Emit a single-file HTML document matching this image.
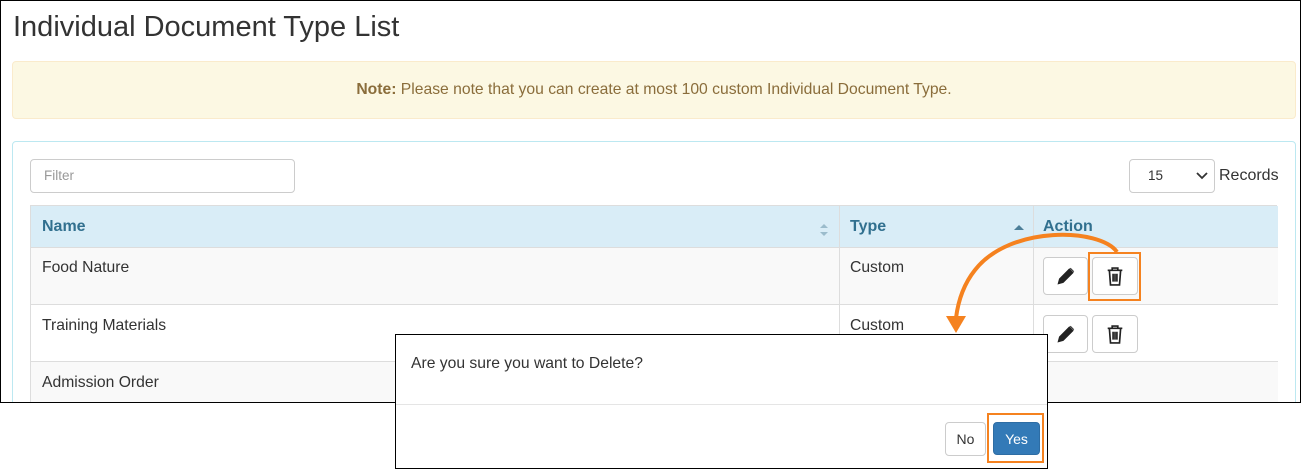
<!DOCTYPE html>
<html><head><style>
*{box-sizing:border-box;margin:0;padding:0}
body{width:1302px;height:472px;background:#fff;position:relative;font-family:"Liberation Sans",Arial,sans-serif;color:#333;font-size:14px;overflow:hidden}
.a{position:absolute}
.btn{position:absolute;background:#fff;border:1px solid #ccc;border-radius:4px;display:flex;align-items:center;justify-content:center}
</style></head><body>
<div class="a" style="left:0;top:0;width:1301px;height:403px;border:1px solid #000;overflow:hidden">
 <div class="a" style="left:12px;top:10px;font-size:29px;color:#333">Individual Document Type List</div>
 <div class="a" style="left:11px;top:60px;width:1284px;height:58px;background:#fcf8e3;border:1px solid #faebcc;border-radius:4px;color:#8a6d3b;text-align:center;line-height:56px;font-size:15.7px"><b>Note:</b> Please note that you can create at most 100 custom Individual Document Type.</div>
 <div class="a" style="left:11px;top:140px;width:1284px;height:300px;border:1px solid #bce8f1;border-radius:4px"></div>
 <div class="a" style="left:29px;top:158px;width:265px;height:34px;border:1px solid #ccc;border-radius:4px;padding-left:13px;line-height:32px;color:#999;font-size:13.5px">Filter</div>
 <div class="a" style="left:1128px;top:158px;width:86px;height:34px;border:1px solid #ccc;border-radius:4px;padding-left:18px;line-height:32px;font-size:13.5px">15
  <svg class="a" style="left:66px;top:12px" width="12" height="8" viewBox="0 0 12 8"><path d="M1 1l5 5 5-5" fill="none" stroke="#333" stroke-width="1.8"/></svg></div>
 <div class="a" style="left:1218px;top:166px;font-size:16px">Records</div>
 <div class="a" style="left:29px;top:204px;width:1247px;height:200px;border:1px solid #ddd;border-bottom:none">
  <div class="a" style="left:0;top:0;width:1247px;height:42px;background:#d9edf7;border-bottom:1px solid #ddd"></div>
  <div class="a" style="left:0;top:42px;width:1247px;height:57px;background:#f9f9f9;border-bottom:1px solid #ddd"></div>
  <div class="a" style="left:0;top:99px;width:1247px;height:57px;background:#fff;border-bottom:1px solid #ddd"></div>
  <div class="a" style="left:0;top:156px;width:1247px;height:50px;background:#f9f9f9"></div>
  <div class="a" style="left:808px;top:0;width:1px;height:200px;background:#ddd"></div>
  <div class="a" style="left:1002px;top:0;width:1px;height:200px;background:#ddd"></div>
  <div class="a" style="left:11px;top:12px;font-weight:bold;color:#31708f;font-size:16px">Name</div>
  <div class="a" style="left:819px;top:12px;font-weight:bold;color:#31708f;font-size:16px">Type</div>
  <div class="a" style="left:1012px;top:12px;font-weight:bold;color:#31708f;font-size:16px">Action</div>
  <svg class="a" style="left:788px;top:17px" width="10" height="14" viewBox="0 0 10 14"><path d="M1 5l4-4 4 4zM1 9l4 4 4-4z" fill="#9bbccc"/></svg>
  <svg class="a" style="left:983px;top:18px" width="10" height="6" viewBox="0 0 10 6"><path d="M0 6l5-5 5 5z" fill="#4d7f99"/></svg>
  <div class="a" style="left:11px;top:53px;font-size:15.7px">Food Nature</div>
  <div class="a" style="left:819px;top:53px;font-size:15.7px">Custom</div>
  <div class="a" style="left:11px;top:111px;font-size:15.7px">Training Materials</div>
  <div class="a" style="left:819px;top:111px;font-size:15.7px">Custom</div>
  <div class="a" style="left:11px;top:168px;font-size:15.7px">Admission Order</div>
 </div>
 <div class="btn" style="left:1042px;top:256px;width:45px;height:38px"><svg width="18" height="18" viewBox="0 0 16 16"><path d="M1 15l1.2-4.5 8.8-8.8 3.3 3.3-8.8 8.8z M11.8 1l3.2 3.2" fill="#222" stroke="#222" stroke-width="0.8"/></svg></div>
 <div class="btn" style="left:1091px;top:256px;width:46px;height:38px"><svg width="18" height="21" viewBox="0 0 16 18"><path d="M1.5 3.5h13M5.5 3.5V1.5h5v2M3 3.5l1 13h8l1-13M6.3 6.5v7M8 6.5v7M9.7 6.5v7" fill="none" stroke="#222" stroke-width="1.5"/></svg></div>
 <div class="a" style="left:1087px;top:251px;width:53px;height:49px;border:2px solid #f5821f"></div>
 <div class="btn" style="left:1042px;top:314px;width:45px;height:38px"><svg width="18" height="18" viewBox="0 0 16 16"><path d="M1 15l1.2-4.5 8.8-8.8 3.3 3.3-8.8 8.8z M11.8 1l3.2 3.2" fill="#222" stroke="#222" stroke-width="0.8"/></svg></div>
 <div class="btn" style="left:1091px;top:314px;width:46px;height:38px"><svg width="18" height="21" viewBox="0 0 16 18"><path d="M1.5 3.5h13M5.5 3.5V1.5h5v2M3 3.5l1 13h8l1-13M6.3 6.5v7M8 6.5v7M9.7 6.5v7" fill="none" stroke="#222" stroke-width="1.5"/></svg></div>
</div>
<div class="a" style="left:395px;top:334px;width:653px;height:135px;border:1px solid #000;background:#fff">
 <div class="a" style="left:15px;top:20px;font-size:15.7px">Are you sure you want to Delete?</div>
 <div class="a" style="left:0;top:69px;width:651px;height:1px;background:#e5e5e5"></div>
 <div class="btn" style="left:549px;top:87px;width:41px;height:34px;font-size:14px">No</div>
 <div class="btn" style="left:597px;top:87px;width:47px;height:33px;background:#337ab7;border-color:#2e6da4;color:#fff;font-size:14px">Yes</div>
 <div class="a" style="left:591px;top:78px;width:57px;height:50px;border:2px solid #f5821f"></div>
</div>
<svg class="a" style="left:0;top:0" width="1302" height="472">
 <path d="M1117 252C1100 228 1010 225 975 270C963 285 958 302 956 318" fill="none" stroke="#f5821f" stroke-width="4"/>
 <path d="M946 316l10 17 10-17z" fill="#f5821f"/>
</svg>
</body></html>
